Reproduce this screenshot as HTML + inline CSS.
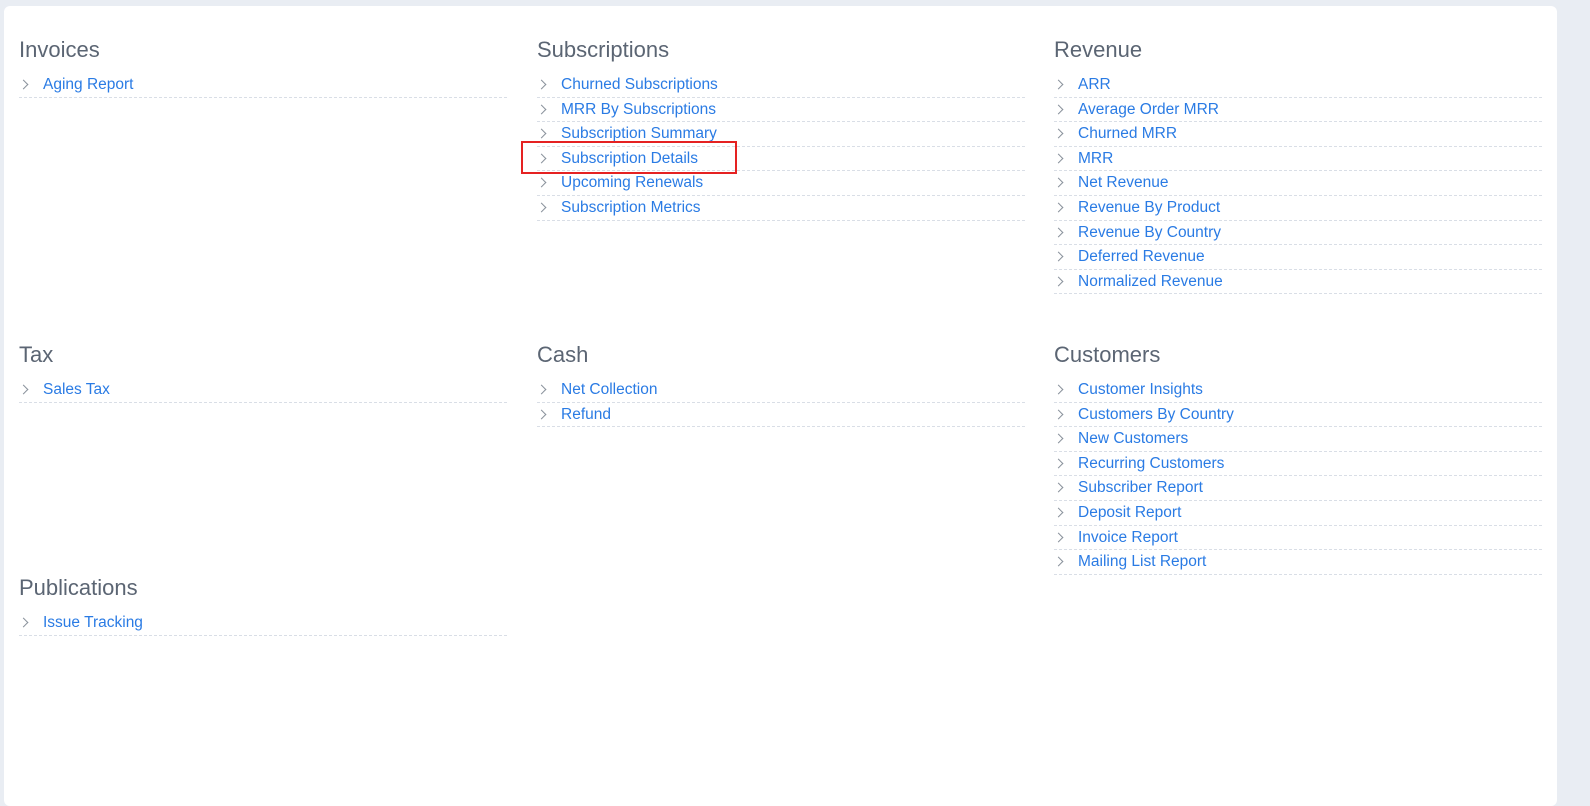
<!DOCTYPE html>
<html><head><style>
body{margin:0;background:#e9edf3;width:1590px;height:758px;overflow:hidden;font-family:"Liberation Sans",sans-serif;}
.card{position:absolute;left:4px;top:6px;width:1553px;height:800px;background:#fff;border-radius:6px;}
.sec{position:absolute;width:488px;}
h2{margin:0;height:40px;font-size:22px;font-weight:normal;color:#5b6573;line-height:34px;}
ul{list-style:none;margin:0;padding:0;}
li{height:23.6px;border-bottom:1px dashed #d9dee6;font-size:15.5px;line-height:24px;color:#2a7be4;padding-left:24px;position:relative;}
li:before{content:"";position:absolute;left:1px;top:8px;width:6px;height:6px;border-top:1px solid #8a929c;border-right:1px solid #8a929c;transform:rotate(45deg);}
.hl{position:absolute;left:521px;top:141px;width:212px;height:29px;border:2px solid #e52222;}
</style></head><body>
<div class="card"></div>
<div class="sec" style="left:19px;top:33px"><h2>Invoices</h2><ul><li>Aging Report</li></ul></div>
<div class="sec" style="left:537px;top:33px"><h2>Subscriptions</h2><ul><li>Churned Subscriptions</li><li>MRR By Subscriptions</li><li>Subscription Summary</li><li>Subscription Details</li><li>Upcoming Renewals</li><li>Subscription Metrics</li></ul></div>
<div class="sec" style="left:1054px;top:33px"><h2>Revenue</h2><ul><li>ARR</li><li>Average Order MRR</li><li>Churned MRR</li><li>MRR</li><li>Net Revenue</li><li>Revenue By Product</li><li>Revenue By Country</li><li>Deferred Revenue</li><li>Normalized Revenue</li></ul></div>
<div class="sec" style="left:19px;top:338px"><h2>Tax</h2><ul><li>Sales Tax</li></ul></div>
<div class="sec" style="left:537px;top:338px"><h2>Cash</h2><ul><li>Net Collection</li><li>Refund</li></ul></div>
<div class="sec" style="left:1054px;top:338px"><h2>Customers</h2><ul><li>Customer Insights</li><li>Customers By Country</li><li>New Customers</li><li>Recurring Customers</li><li>Subscriber Report</li><li>Deposit Report</li><li>Invoice Report</li><li>Mailing List Report</li></ul></div>
<div class="sec" style="left:19px;top:571px"><h2>Publications</h2><ul><li>Issue Tracking</li></ul></div>
<div class="hl"></div>
</body></html>
